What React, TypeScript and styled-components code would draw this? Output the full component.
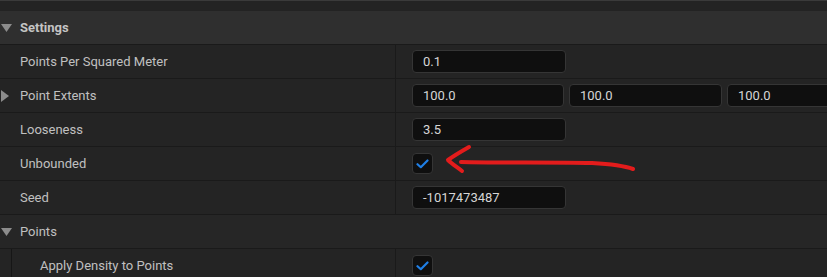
import React from 'react';
import styled, { createGlobalStyle } from 'styled-components';

const GlobalStyle = createGlobalStyle`
  html, body {
    margin: 0;
    padding: 0;
    background: #242424;
  }
  body {
    font-family: Roboto, "Noto Sans", sans-serif;
    overflow: hidden;
  }
`;

const Panel = styled.div`
  position: relative;
  width: 827px;
  height: 277px;
  background: #242424;
  overflow: hidden;
`;

const TopStrip = styled.div`
  height: 10px;
  background: #232323;
  border-top: 1px solid #3a3a3a;
`;

const Row = styled.div<{ $header?: boolean; $sub?: boolean }>`
  display: flex;
  height: 33px;
  border-bottom: 1px solid #1a1a1a;
  background: ${(p) => (p.$header ? '#2f2f2f' : p.$sub ? '#262626' : '#242424')};
`;

const Label = styled.div<{ $indent?: number; $bold?: boolean }>`
  position: relative;
  display: flex;
  align-items: center;
  width: 395px;
  flex-shrink: 0;
  box-sizing: border-box;
  padding-left: ${(p) => 20 + (p.$indent || 0)}px;
  font-size: 13px;
  font-weight: ${(p) => (p.$bold ? 700 : 400)};
  color: ${(p) => (p.$bold ? '#c4c4c4' : '#c0c0c0')};
`;

const Guide = styled.div`
  position: absolute;
  left: 11px;
  top: 0;
  bottom: -1px;
  width: 1px;
  background: #161616;
`;

const Divider = styled.div`
  width: 1px;
  background: #1a1a1a;
  flex-shrink: 0;
`;

const Value = styled.div`
  display: flex;
  align-items: center;
  gap: 5px;
  padding-left: 16px;
  flex: 1;
  overflow: hidden;
`;

const Field = styled.div<{ $w?: number }>`
  display: flex;
  align-items: center;
  box-sizing: border-box;
  width: ${(p) => p.$w || 154}px;
  flex-shrink: 0;
  height: 23px;
  padding-left: 10px;
  background: #0f0f0f;
  border: 1px solid #353535;
  border-radius: 4px;
  font-size: 13px;
  color: #d6d6d6;
`;

const Check = styled.div`
  display: flex;
  align-items: center;
  justify-content: center;
  box-sizing: border-box;
  width: 21px;
  height: 21px;
  background: #0f0f0f;
  border: 1px solid #353535;
  border-radius: 4px;
`;

const Caret = styled.svg`
  position: absolute;
  left: 1px;
  top: 50%;
  transform: translateY(-50%);
`;

const Scribble = styled.svg`
  position: absolute;
  left: 0;
  top: 0;
  pointer-events: none;
`;

const Down = () => (
  <Caret width="11" height="8" viewBox="0 0 11 8">
    <path d="M0 0 H11 L5.5 8 Z" fill="#8c8c8c" />
  </Caret>
);

const Right = () => (
  <Caret width="8" height="12" viewBox="0 0 8 12">
    <path d="M0 0 L8 6 L0 12 Z" fill="#8c8c8c" />
  </Caret>
);

const Tick = () => (
  <Check>
    <svg width="13" height="10" viewBox="0 0 13 10">
      <path d="M1.5 5.2 L4.8 8.2 L11.5 1.5" fill="none" stroke="#1f7fe6" strokeWidth="2.2" strokeLinecap="round" strokeLinejoin="round" />
    </svg>
  </Check>
);

const Prop: React.FC<{ label: string; indent?: number; caret?: React.ReactNode; children: React.ReactNode }> = ({ label, indent, caret, children }) => (
  <Row>
    <Label $indent={indent}>
      {indent ? <Guide /> : null}
      {caret}
      {label}
    </Label>
    <Divider />
    <Value>{children}</Value>
  </Row>
);

const App: React.FC = () => (
  <Panel>
    <GlobalStyle />
    <TopStrip />
    <Row $header>
      <Label $bold>
        <Down />
        Settings
      </Label>
    </Row>
    <Prop label="Points Per Squared Meter">
      <Field>0.1</Field>
    </Prop>
    <Prop label="Point Extents" caret={<Right />}>
      <Field $w={152}>100.0</Field>
      <Field $w={153}>100.0</Field>
      <Field $w={153}>100.0</Field>
    </Prop>
    <Prop label="Looseness">
      <Field>3.5</Field>
    </Prop>
    <Prop label="Unbounded">
      <Tick />
    </Prop>
    <Prop label="Seed">
      <Field>-1017473487</Field>
    </Prop>
    <Row $sub>
      <Label>
        <Down />
        Points
      </Label>
    </Row>
    <Prop label="Apply Density to Points" indent={20}>
      <Tick />
    </Prop>
    <Scribble width="827" height="277" viewBox="0 0 827 277">
      <path
        d="M469 147 C462 151 455 155 448 160 C452 164 457 167 462 171"
        fill="none"
        stroke="#e31c1c"
        strokeWidth="4"
        strokeLinecap="round"
        strokeLinejoin="round"
      />
      <path
        d="M461 162 C500 163 550 162 592 163 C610 164 622 165 633 169"
        fill="none"
        stroke="#e31c1c"
        strokeWidth="4"
        strokeLinecap="round"
      />
    </Scribble>
  </Panel>
);

export default App;
